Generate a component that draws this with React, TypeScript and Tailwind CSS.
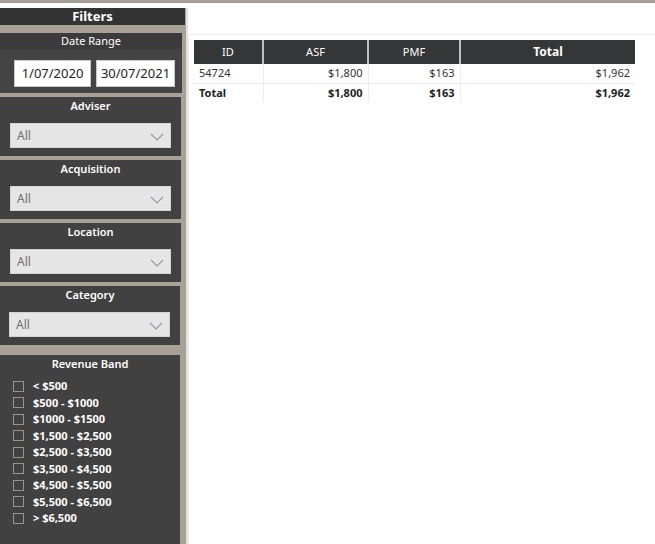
const bands = [
  '< $500',
  '$500 - $1000',
  '$1000 - $1500',
  '$1,500 - $2,500',
  '$2,500 - $3,500',
  '$3,500 - $4,500',
  '$4,500 - $5,500',
  '$5,500 - $6,500',
  '> $6,500',
];

function Dropdown({ className }: { className: string }) {
  return (
    <div className={`h-[25px] bg-[#e6e6e6] border border-[#d4d4d4] flex items-center justify-between pl-[6px] pr-[6px] ${className}`}>
      <span className="text-[12px] text-[#6f6f6f]">All</span>
      <svg width="14" height="8" viewBox="0 0 14 8" className="mt-[2px]">
        <polyline points="1,1 7,7 13,1" fill="none" stroke="#8d9aa8" strokeWidth="1.1" />
      </svg>
    </div>
  );
}

function Slicer({ title, width, dropClass }: { title: string; width: string; dropClass: string }) {
  return (
    <div className={`${width} mt-[4px] h-[59px] bg-[#414141] flex flex-col`}>
      <div className="h-[18px] pt-[1px] text-center text-[11px] font-semibold text-white">{title}</div>
      <Dropdown className={dropClass} />
    </div>
  );
}

export default function App() {
  return (
    <div
      className="w-[655px] h-[544px] bg-white overflow-hidden flex flex-col"
      style={{ fontFamily: '"Segoe UI", "Noto Sans", "Open Sans", sans-serif' }}
    >
      <div className="h-[3px] bg-[#a59e93] shrink-0" />
      <div className="flex flex-1 min-h-0">
        {/* Filters pane */}
        <aside className="w-[188px] mt-[5px] bg-[#a8a196] border-r-2 border-[#e6e3df] flex flex-col">
          <div className="w-[185px] h-[17px] bg-[#333333] text-white text-[13px] font-bold leading-[17px] text-center">
            Filters
          </div>

          {/* Date range */}
          <div className="w-[182px] h-[60px] mt-[8px] bg-[#444444] flex flex-col">
            <div className="h-[16px] bg-[#3b3b3b] text-white text-[11px] leading-[16px] text-center">Date Range</div>
            <div className="flex gap-[5px] pl-[14px] mt-[11px]">
              <div className="w-[77px] h-[27px] bg-white border border-[#c8c8c8] flex items-center justify-center text-[13px] text-[#222]">
                1/07/2020
              </div>
              <div className="w-[79px] h-[27px] bg-white border border-[#c8c8c8] flex items-center justify-center text-[13px] text-[#222]">
                30/07/2021
              </div>
            </div>
          </div>

          <Slicer title="Adviser" width="w-[181px]" dropClass="ml-[10px] w-[161px] mt-[8px]" />
          <Slicer title="Acquisition" width="w-[181px]" dropClass="ml-[10px] w-[161px] mt-[8px]" />
          <Slicer title="Location" width="w-[181px]" dropClass="ml-[10px] w-[161px] mt-[8px]" />
          <Slicer title="Category" width="w-[180px]" dropClass="ml-[9px] w-[161px] mt-[8px]" />

          {/* Revenue band */}
          <div className="w-[180px] flex-1 mt-[10px] bg-[#414141] pt-[1px]">
            <div className="h-[18px] text-center text-[11px] font-semibold text-white">Revenue Band</div>
            <div className="mt-[4px] flex flex-col">
              {bands.map((b) => (
                <div key={b} className="h-[16.5px] flex items-center pl-[13px] gap-[9px]">
                  <span className="w-[11px] h-[11px] border border-[#9a958c] shrink-0" />
                  <span className="text-[11px] font-bold text-white">{b}</span>
                </div>
              ))}
            </div>
          </div>
        </aside>

        {/* Report */}
        <main className="flex-1 pt-[31px]">
          <div className="h-full border-t border-l border-[#ececec] pl-[5px] pt-[5px]">
            <table className="w-[441px] border-collapse text-[11px] text-[#333]">
              <thead>
                <tr className="h-[24px] bg-[#343637] text-white">
                  <th className="w-[69px] font-normal border-r-2 border-[#bfbfbf]">ID</th>
                  <th className="w-[105px] font-normal border-r-2 border-[#bfbfbf]">ASF</th>
                  <th className="w-[92px] font-normal border-r-2 border-[#bfbfbf]">PMF</th>
                  <th className="font-bold text-[12px]">Total</th>
                </tr>
              </thead>
              <tbody>
                <tr className="h-[19px] border-b border-[#ececec]">
                  <td className="pl-[5px] border-r border-[#ececec]">54724</td>
                  <td className="pr-[5px] text-right border-r border-[#ececec]">$1,800</td>
                  <td className="pr-[5px] text-right border-r border-[#ececec]">$163</td>
                  <td className="pr-[5px] text-right">$1,962</td>
                </tr>
                <tr className="h-[19px] font-bold text-[#222]">
                  <td className="pl-[5px] border-r border-[#ececec]">Total</td>
                  <td className="pr-[5px] text-right border-r border-[#ececec]">$1,800</td>
                  <td className="pr-[5px] text-right border-r border-[#ececec]">$163</td>
                  <td className="pr-[5px] text-right">$1,962</td>
                </tr>
              </tbody>
            </table>
          </div>
        </main>
      </div>
    </div>
  );
}
